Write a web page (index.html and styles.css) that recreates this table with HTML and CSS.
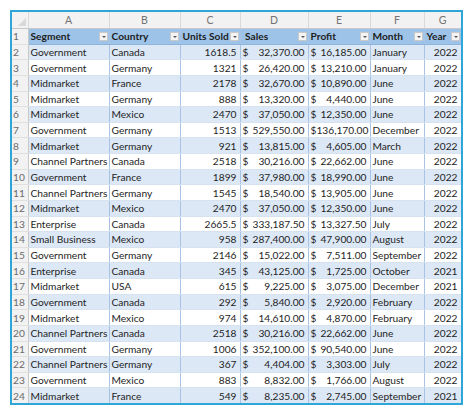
FILE: index.html
```html
<!DOCTYPE html>
<html>
<head>
<meta charset="utf-8">
<link rel="stylesheet" href="styles.css">
</head>
<body>
<div class="frame">
<table class="sheet">
<colgroup>
<col class="c-rn"><col class="c-a"><col class="c-b"><col class="c-c"><col class="c-d"><col class="c-e"><col class="c-f"><col class="c-g">
</colgroup>
<thead>
<tr class="letters"><th class="corner"><span class="tri"></span></th><th>A</th><th>B</th><th>C</th><th>D</th><th>E</th><th>F</th><th>G</th></tr>
</thead>
<tbody>
<tr class="hdr"><td class="rn">1</td>
<td><div class="h">Segment<span class="dd"></span></div></td>
<td><div class="h">Country<span class="dd"></span></div></td>
<td><div class="h">Units Sold<span class="dd"></span></div></td>
<td><div class="h">&nbsp;Sales<span class="dd"></span></div></td>
<td><div class="h">Profit<span class="dd"></span></div></td>
<td><div class="h">Month<span class="dd"></span></div></td>
<td><div class="h">Year<span class="dd"></span></div></td></tr>
<tr class="b"><td class="rn">2</td><td>Government</td><td>Canada</td><td class="n">1618.5</td><td><div class="acc"><span>$</span><span>32,370.00</span></div></td><td><div class="acc"><span>$</span><span>16,185.00</span></div></td><td>January</td><td class="n">2022</td></tr>
<tr class="w"><td class="rn">3</td><td>Government</td><td>Germany</td><td class="n">1321</td><td><div class="acc"><span>$</span><span>26,420.00</span></div></td><td><div class="acc"><span>$</span><span>13,210.00</span></div></td><td>January</td><td class="n">2022</td></tr>
<tr class="b"><td class="rn">4</td><td>Midmarket</td><td>France</td><td class="n">2178</td><td><div class="acc"><span>$</span><span>32,670.00</span></div></td><td><div class="acc"><span>$</span><span>10,890.00</span></div></td><td>June</td><td class="n">2022</td></tr>
<tr class="w"><td class="rn">5</td><td>Midmarket</td><td>Germany</td><td class="n">888</td><td><div class="acc"><span>$</span><span>13,320.00</span></div></td><td><div class="acc"><span>$</span><span>4,440.00</span></div></td><td>June</td><td class="n">2022</td></tr>
<tr class="b"><td class="rn">6</td><td>Midmarket</td><td>Mexico</td><td class="n">2470</td><td><div class="acc"><span>$</span><span>37,050.00</span></div></td><td><div class="acc"><span>$</span><span>12,350.00</span></div></td><td>June</td><td class="n">2022</td></tr>
<tr class="w"><td class="rn">7</td><td>Government</td><td>Germany</td><td class="n">1513</td><td><div class="acc"><span>$</span><span>529,550.00</span></div></td><td><div class="acc"><span>$</span><span>136,170.00</span></div></td><td>December</td><td class="n">2022</td></tr>
<tr class="b"><td class="rn">8</td><td>Midmarket</td><td>Germany</td><td class="n">921</td><td><div class="acc"><span>$</span><span>13,815.00</span></div></td><td><div class="acc"><span>$</span><span>4,605.00</span></div></td><td>March</td><td class="n">2022</td></tr>
<tr class="w"><td class="rn">9</td><td>Channel Partners</td><td>Canada</td><td class="n">2518</td><td><div class="acc"><span>$</span><span>30,216.00</span></div></td><td><div class="acc"><span>$</span><span>22,662.00</span></div></td><td>June</td><td class="n">2022</td></tr>
<tr class="b"><td class="rn">10</td><td>Government</td><td>France</td><td class="n">1899</td><td><div class="acc"><span>$</span><span>37,980.00</span></div></td><td><div class="acc"><span>$</span><span>18,990.00</span></div></td><td>June</td><td class="n">2022</td></tr>
<tr class="w"><td class="rn">11</td><td>Channel Partners</td><td>Germany</td><td class="n">1545</td><td><div class="acc"><span>$</span><span>18,540.00</span></div></td><td><div class="acc"><span>$</span><span>13,905.00</span></div></td><td>June</td><td class="n">2022</td></tr>
<tr class="b"><td class="rn">12</td><td>Midmarket</td><td>Mexico</td><td class="n">2470</td><td><div class="acc"><span>$</span><span>37,050.00</span></div></td><td><div class="acc"><span>$</span><span>12,350.00</span></div></td><td>June</td><td class="n">2022</td></tr>
<tr class="w"><td class="rn">13</td><td>Enterprise</td><td>Canada</td><td class="n">2665.5</td><td><div class="acc"><span>$</span><span>333,187.50</span></div></td><td><div class="acc"><span>$</span><span>13,327.50</span></div></td><td>July</td><td class="n">2022</td></tr>
<tr class="b"><td class="rn">14</td><td>Small Business</td><td>Mexico</td><td class="n">958</td><td><div class="acc"><span>$</span><span>287,400.00</span></div></td><td><div class="acc"><span>$</span><span>47,900.00</span></div></td><td>August</td><td class="n">2022</td></tr>
<tr class="w"><td class="rn">15</td><td>Government</td><td>Germany</td><td class="n">2146</td><td><div class="acc"><span>$</span><span>15,022.00</span></div></td><td><div class="acc"><span>$</span><span>7,511.00</span></div></td><td>September</td><td class="n">2022</td></tr>
<tr class="b"><td class="rn">16</td><td>Enterprise</td><td>Canada</td><td class="n">345</td><td><div class="acc"><span>$</span><span>43,125.00</span></div></td><td><div class="acc"><span>$</span><span>1,725.00</span></div></td><td>October</td><td class="n">2021</td></tr>
<tr class="w"><td class="rn">17</td><td>Midmarket</td><td>USA</td><td class="n">615</td><td><div class="acc"><span>$</span><span>9,225.00</span></div></td><td><div class="acc"><span>$</span><span>3,075.00</span></div></td><td>December</td><td class="n">2021</td></tr>
<tr class="b"><td class="rn">18</td><td>Government</td><td>Canada</td><td class="n">292</td><td><div class="acc"><span>$</span><span>5,840.00</span></div></td><td><div class="acc"><span>$</span><span>2,920.00</span></div></td><td>February</td><td class="n">2022</td></tr>
<tr class="w"><td class="rn">19</td><td>Midmarket</td><td>Mexico</td><td class="n">974</td><td><div class="acc"><span>$</span><span>14,610.00</span></div></td><td><div class="acc"><span>$</span><span>4,870.00</span></div></td><td>February</td><td class="n">2022</td></tr>
<tr class="b"><td class="rn">20</td><td>Channel Partners</td><td>Canada</td><td class="n">2518</td><td><div class="acc"><span>$</span><span>30,216.00</span></div></td><td><div class="acc"><span>$</span><span>22,662.00</span></div></td><td>June</td><td class="n">2022</td></tr>
<tr class="w"><td class="rn">21</td><td>Government</td><td>Germany</td><td class="n">1006</td><td><div class="acc"><span>$</span><span>352,100.00</span></div></td><td><div class="acc"><span>$</span><span>90,540.00</span></div></td><td>June</td><td class="n">2022</td></tr>
<tr class="b"><td class="rn">22</td><td>Channel Partners</td><td>Germany</td><td class="n">367</td><td><div class="acc"><span>$</span><span>4,404.00</span></div></td><td><div class="acc"><span>$</span><span>3,303.00</span></div></td><td>July</td><td class="n">2022</td></tr>
<tr class="w"><td class="rn">23</td><td>Government</td><td>Mexico</td><td class="n">883</td><td><div class="acc"><span>$</span><span>8,832.00</span></div></td><td><div class="acc"><span>$</span><span>1,766.00</span></div></td><td>August</td><td class="n">2022</td></tr>
<tr class="b"><td class="rn">24</td><td>Midmarket</td><td>France</td><td class="n">549</td><td><div class="acc"><span>$</span><span>8,235.00</span></div></td><td><div class="acc"><span>$</span><span>2,745.00</span></div></td><td>September</td><td class="n">2021</td></tr>
</tbody>
</table>
</div>
</body>
</html>
```
FILE: styles.css
```css
html, body {
  margin: 0;
  padding: 0;
  background: #ffffff;
}
body {
  font-family: Lato, "Liberation Sans", sans-serif;
  color: #1e1e1e;
}
.frame {
  margin: 10px 0 0 10px;
  width: 449px;
  height: 391px;
  border: 2px solid #2ea6d8;
  overflow: hidden;
  background: #ffffff;
}
.sheet {
  width: 449px;
  table-layout: fixed;
  border-collapse: collapse;
  font-size: 10.2px;
}
.c-rn { width: 16px; }
.c-a { width: 81px; }
.c-b { width: 71px; }
.c-c { width: 60px; }
.c-d { width: 68px; }
.c-e { width: 62px; }
.c-f { width: 54px; }
.c-g { width: 37px; }

.sheet th, .sheet td {
  padding: 0 2px;
  white-space: nowrap;
  overflow: hidden;
  line-height: 14px;
}
.letters th {
  height: 16px;
  background: #f2f2f2;
  color: #737373;
  font-weight: normal;
  font-size: 10.5px;
  border-right: 1px solid #dadada;
  border-bottom: 1px solid #c8c8c8;
  text-align: center;
}
.letters th.corner {
  position: relative;
}
.tri {
  position: absolute;
  right: 2px;
  bottom: 2px;
  width: 0;
  height: 0;
  border-left: 8px solid transparent;
  border-bottom: 8px solid #d8d8d8;
}
.sheet tbody tr {
  height: 15.625px;
}
.sheet td {
  border-right: 1px solid #a8c3e3;
  border-bottom: 1px solid #d6e2f0;
}
.sheet td.rn {
  background: #f2f2f2;
  color: #6b6b6b;
  text-align: left;
  padding: 0 0 0 1px;
  border-right: 1px solid #c8c8c8;
  border-bottom: 1px solid #e0e0e0;
}
.sheet td.n {
  text-align: right;
  padding-right: 3px;
}
tr.b td { background: #dce8f6; }
tr.w td { background: #ffffff; }
tr.b td.rn, tr.w td.rn { background: #f2f2f2; }
tr.hdr td {
  background: #9dc3e8;
  font-weight: bold;
  border-bottom: 1px solid #8fb4db;
}
tr.hdr td.rn { background: #f2f2f2; font-weight: normal; }
.h {
  display: flex;
  align-items: center;
  justify-content: space-between;
}
.dd {
  flex: none;
  width: 9px;
  height: 9px;
  background: #f4f4f4;
  border: 1px solid #c9c9c9;
  box-sizing: border-box;
  position: relative;
  margin-right: -1px;
}
.dd::after {
  content: "";
  position: absolute;
  left: 2px;
  top: 3px;
  border-left: 2px solid transparent;
  border-right: 2px solid transparent;
  border-top: 2px solid #555;
}
.acc {
  display: flex;
  justify-content: space-between;
  padding-right: 1px;
}
```
